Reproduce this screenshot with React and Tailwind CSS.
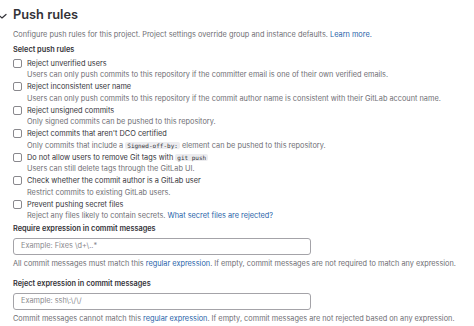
import React from 'react';

const rules = [
  {
    label: 'Reject unverified users',
    help: 'Users can only push commits to this repository if the committer email is one of their own verified emails.',
  },
  {
    label: 'Reject inconsistent user name',
    help: 'Users can only push commits to this repository if the commit author name is consistent with their GitLab account name.',
  },
  {
    label: 'Reject unsigned commits',
    help: 'Only signed commits can be pushed to this repository.',
  },
  {
    label: "Reject commits that aren't DCO certified",
    help: (
      <>
        Only commits that include a <code className="bg-[#ececef] px-[2px] rounded-[2px] text-[#333238] font-['DejaVu_Sans_Mono',monospace] text-[6px]">Signed-off-by:</code> element can be pushed to this repository.
      </>
    ),
  },
  {
    label: (
      <>
        Do not allow users to remove Git tags with <code className="bg-[#ececef] px-[2px] rounded-[2px] font-['DejaVu_Sans_Mono',monospace] text-[6px]">git push</code>
      </>
    ),
    help: 'Users can still delete tags through the GitLab UI.',
  },
  {
    label: 'Check whether the commit author is a GitLab user',
    help: 'Restrict commits to existing GitLab users.',
  },
  {
    label: 'Prevent pushing secret files',
    help: (
      <>
        Reject any files likely to contain secrets. <a className="text-[#1f5fa8]">What secret files are rejected?</a>
      </>
    ),
  },
];

function Checkbox() {
  return <span className="mt-[1px] w-[9px] h-[9px] shrink-0 rounded-[2px] border border-[#89888d] bg-white" />;
}

export default function App() {
  return (
    <div className="w-[474px] h-[326px] overflow-hidden bg-white font-['Inter',sans-serif] text-[7.35px] leading-[11.5px] text-[#333238]">
      <div className="relative pl-[13px] pt-[6px]">
        <svg className="absolute left-[-3px] top-[12px]" width="10" height="8" viewBox="0 0 10 8" fill="none">
          <path d="M1 2.5 L5 6 L9 2.5" stroke="#333238" strokeWidth="1.2" strokeLinecap="round" strokeLinejoin="round" />
        </svg>
        <h2 className="text-[12.8px] leading-[18px] font-semibold">Push rules</h2>
        <p className="mt-[4.5px] text-[#6e6d73]">
          Configure push rules for this project. Project settings override group and instance defaults. <a className="text-[#1f5fa8]">Learn more.</a>
        </p>

        <div className="mt-[4px] font-semibold">Select push rules</div>
        <div className="mt-[2px] flex flex-col">
          {rules.map((r, i) => (
            <div key={i} className="flex gap-[5px] h-[23.5px]">
              <Checkbox />
              <div>
                <div>{r.label}</div>
                <div className="text-[#6e6d73]">{r.help}</div>
              </div>
            </div>
          ))}
        </div>

        <div className="mt-[1px] font-semibold">Require expression in commit messages</div>
        <div className="mt-[3px] w-[298px] h-[17px] rounded-[3px] border border-[#a4a3a8] px-[7px] flex items-center text-[#89888d]">
          {'Example: Fixes \\d+\\..*'}
        </div>
        <p className="mt-[3px] text-[#6e6d73]">
          All commit messages must match this <a className="text-[#1f5fa8]">regular expression</a>. If empty, commit messages are not required to match any expression.
        </p>

        <div className="mt-[9px] font-semibold">Reject expression in commit messages</div>
        <div className="mt-[3px] w-[298px] h-[17px] rounded-[3px] border border-[#a4a3a8] px-[7px] flex items-center text-[#89888d]">
          {'Example: ssh\\:\\/\\/'}
        </div>
        <p className="mt-[3px] text-[#6e6d73]">
          Commit messages cannot match this <a className="text-[#1f5fa8]">regular expression</a>. If empty, commit messages are not rejected based on any expression.
        </p>
      </div>
    </div>
  );
}
